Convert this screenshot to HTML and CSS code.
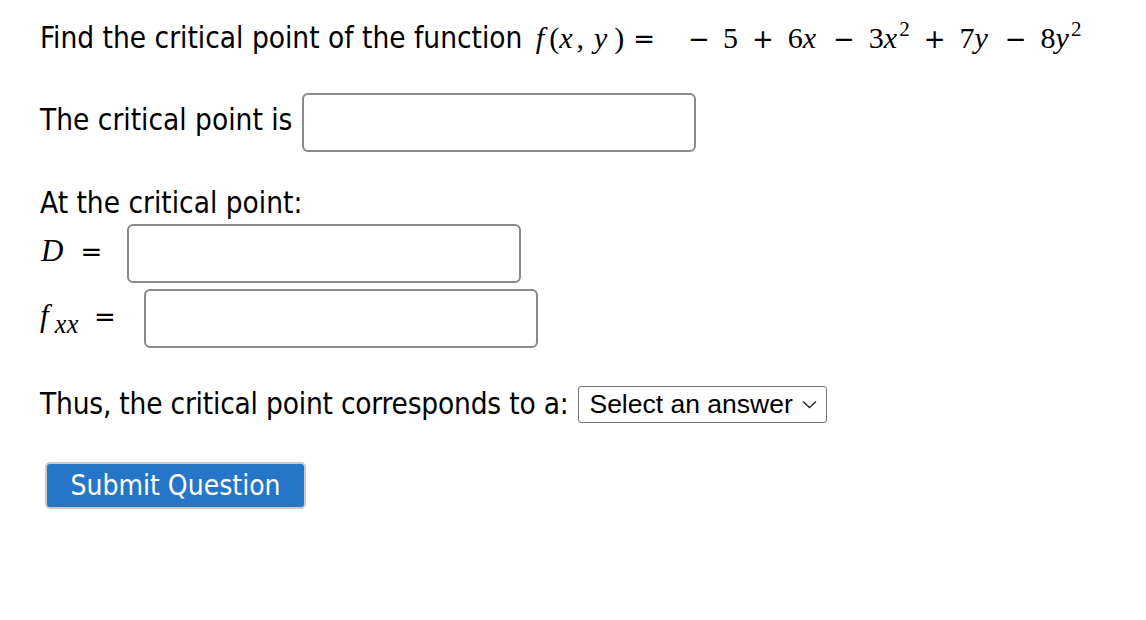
FILE: index.html
```html
<!DOCTYPE html>
<html>
<head>
<meta charset="utf-8">
<link rel="stylesheet" href="styles.css">
</head>
<body>
<div class="page">
  <p class="q">Find the critical point of the function <span class="math eq"><i class="fn">f</i><span class="p">(</span><i class="v">x</i><span class="cm">,</span><i class="v yv">y</i><span class="p">)</span><span class="rel">=</span><span class="op">−</span>5<span class="op">+</span>6<i class="v">x</i><span class="op">−</span>3<i class="v">x</i><sup class="sup">2</sup><span class="op">+</span>7<i class="v">y</i><span class="op">−</span>8<i class="v">y</i><sup class="sup">2</sup></span></p>

  <div class="row r1">
    <span class="label">The critical point is</span>
    <input class="ans" type="text">
  </div>

  <p class="at">At the critical point:</p>

  <div class="row r2">
    <span class="math mlab"><i class="dv">D</i><span class="rel">=</span></span>
    <input class="ans" type="text">
  </div>

  <div class="row r3">
    <span class="math mlab"><i class="ff">f</i><sub class="sub"><i>x</i><i>x</i></sub><span class="rel">=</span></span>
    <input class="ans" type="text">
  </div>

  <div class="row r4">
    <span class="label">Thus, the critical point corresponds to a:</span>
    <div class="select">
      <span class="sel-text">Select an answer</span>
      <svg class="chev" width="15" height="9" viewBox="0 0 15 9"><path d="M1 1.5 L7.5 7.5 L14 1.5" fill="none" stroke="#222" stroke-width="1.3"/></svg>
    </div>
  </div>

  <button class="submit" type="button">Submit Question</button>
</div>
</body>
</html>
```

FILE: styles.css
```css
html, body {
  margin: 0;
  padding: 0;
  background: #ffffff;
}

body {
  font-family: "DejaVu Sans Condensed", "DejaVu Sans", sans-serif;
  font-stretch: semi-condensed;
  font-size: 29.5px;
  color: #000;
}

.page {
  padding: 20px 0 0 40px;
}

.q {
  margin: 0;
  height: 36px;
  line-height: 36px;
  white-space: nowrap;
}

.math {
  font-family: "Liberation Serif", "DejaVu Serif", serif;
  font-size: 30px;
  font-stretch: normal;
}

.math i {
  font-style: italic;
}

.rel,
.op {
  font-family: "DejaVu Sans", sans-serif;
  font-size: 26px;
  font-stretch: normal;
}

.eq {
  margin-left: 5px;
}

.eq .fn {
  margin-right: 5px;
}

.eq .v {
  margin-right: 3px;
}

.eq .cm {
  margin: 0 10px 0 1px;
}

.eq .yv {
  margin-right: 7px;
}

.eq .rel {
  margin: 0 20px 0 9px;
}

.op {
  margin: 0 13px;
}

.eq .op ~ .op {
  margin: 0 14px;
}

.sup {
  font-size: 0.7em;
  vertical-align: 0.55em;
  line-height: 0;
  margin-left: -1px;
}

.sub {
  font-size: 0.85em;
  vertical-align: -0.25em;
  line-height: 0;
  letter-spacing: 0.5px;
}

.row {
  display: flex;
  align-items: flex-start;
  white-space: nowrap;
}

.label {
  line-height: 36px;
}

.ans {
  box-sizing: border-box;
  height: 59px;
  width: 394px;
  border: 2px solid #8a8a8a;
  border-radius: 6px;
  background: #fff;
  margin: 0;
  padding: 0 8px;
  font-size: 20px;
}

.r1 {
  margin-top: 37px;
  height: 59px;
}

.r1 .label {
  margin-top: 9px;
  margin-right: 10px;
}

.at {
  margin: 33px 0 0 0;
  line-height: 36px;
  height: 36px;
}

.r2 {
  margin-top: 3px;
  height: 59px;
}

.r3 {
  margin-top: 6px;
  height: 59px;
}

.mlab {
  line-height: 36px;
  margin-top: 9px;
  font-size: 31px;
}

.r2 .dv {
  margin-left: 1px;
}

.r2 .rel {
  margin: 0 25px 0 17px;
}

.r3 .ff {
  margin-right: 6px;
}

.r3 .rel {
  margin: 0 28px 0 15px;
}

.r4 {
  margin-top: 38px;
  height: 37px;
}

.r4 .label {
  margin-top: 0;
  margin-right: 10px;
  letter-spacing: -0.2px;
}

.select {
  box-sizing: border-box;
  height: 37px;
  width: 249px;
  border: 1px solid #767676;
  border-radius: 3px;
  display: flex;
  align-items: center;
  padding: 0 8px 0 10px;
  gap: 9px;
  font-family: "Liberation Sans", Arial, sans-serif;
  font-stretch: normal;
  font-size: 26.5px;
}

.sel-text {
  line-height: 1;
}

.chev {
  flex: none;
}

.submit {
  display: block;
  margin: 39px 0 0 5px;
  box-sizing: border-box;
  width: 261px;
  height: 47px;
  background: #2575c9;
  color: #fff;
  border: 2px solid #c9c9c9;
  border-radius: 5px;
  font-family: "DejaVu Sans Condensed", "DejaVu Sans", sans-serif;
  font-stretch: semi-condensed;
  font-size: 28px;
  padding: 0;
}
```
